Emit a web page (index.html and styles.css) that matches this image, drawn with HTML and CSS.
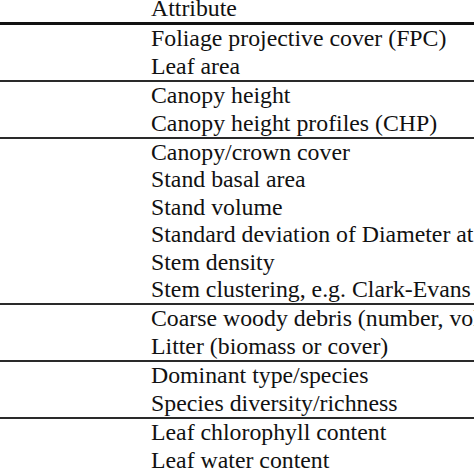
FILE: index.html
```html
<!DOCTYPE html>
<html>
<head>
<meta charset="utf-8">
<link rel="stylesheet" href="styles.css">
</head>
<body>
<div class="table">
  <div class="group head">
    <div class="cat"></div>
    <div class="attrs"><div class="line">Attribute</div></div>
  </div>
  <div class="group">
    <div class="cat"></div>
    <div class="attrs">
      <div class="line">Foliage projective cover (FPC)</div>
      <div class="line">Leaf area</div>
    </div>
  </div>
  <div class="group">
    <div class="cat"></div>
    <div class="attrs">
      <div class="line">Canopy height</div>
      <div class="line">Canopy height profiles (CHP)</div>
    </div>
  </div>
  <div class="group">
    <div class="cat"></div>
    <div class="attrs">
      <div class="line">Canopy/crown cover</div>
      <div class="line">Stand basal area</div>
      <div class="line">Stand volume</div>
      <div class="line">Standard deviation of Diameter at Breast Height (DBH)</div>
      <div class="line">Stem density</div>
      <div class="line">Stem clustering, e.g. Clark-Evans index</div>
    </div>
  </div>
  <div class="group">
    <div class="cat"></div>
    <div class="attrs">
      <div class="line">Coarse woody debris (number, volume)</div>
      <div class="line">Litter (biomass or cover)</div>
    </div>
  </div>
  <div class="group">
    <div class="cat"></div>
    <div class="attrs">
      <div class="line">Dominant type/species</div>
      <div class="line">Species diversity/richness</div>
    </div>
  </div>
  <div class="group">
    <div class="cat"></div>
    <div class="attrs">
      <div class="line">Leaf chlorophyll content</div>
      <div class="line">Leaf water content</div>
    </div>
  </div>
</div>
</body>
</html>
```
FILE: styles.css
```css
html, body {
  margin: 0;
  padding: 0;
  background: #ffffff;
  overflow: hidden;
}
.table {
  width: 474px;
  margin-top: -5px;
  font-family: "Liberation Serif", "Times New Roman", serif;
  font-size: 23.8px;
  line-height: 27.4px;
  color: #111111;
}
.group {
  display: grid;
  grid-template-columns: 151px 1fr;
  border-bottom: 2px solid #2a2a2a;
}
.group.head {
  border-bottom: 3px solid #111111;
}
.attrs {
  display: flex;
  flex-direction: column;
  min-width: 0;
}
.line {
  white-space: nowrap;
}
```
